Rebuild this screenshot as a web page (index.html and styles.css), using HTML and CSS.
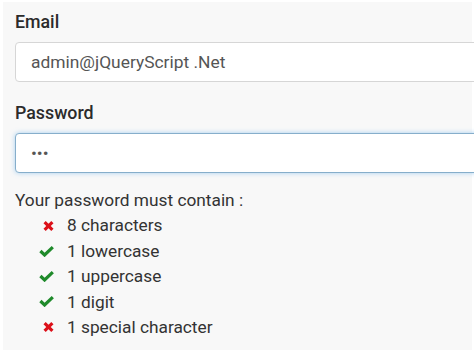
FILE: index.html
```html
<!DOCTYPE html>
<html lang="en">
<head>
    <meta charset="UTF-8">
    <meta name="viewport" content="width=device-width, initial-scale=1.0">
    <title>Password Requirements</title>
    <link rel="stylesheet" href="styles.css">
</head>
<body>
    <div class="panel">
        <form class="form" action="#" method="post">
            <div class="form-group">
                <label class="form-label" for="email">Email</label>
                <input class="form-control" type="text" id="email" name="email" value="admin@jQueryScript .Net" readonly>
            </div>

            <div class="form-group">
                <label class="form-label" for="password">Password</label>
                <input class="form-control is-focused" type="password" id="password" name="password" value="abc" readonly>
            </div>

            <div class="rules">
                <p class="rules-title">Your password must contain :</p>
                <ul class="rules-list">
                    <li class="rule">
                        <span class="rule-icon">
                            <svg class="icon-cross" width="11" height="10" viewBox="0 0 11 10"><path d="M1.6 1.2 L9.4 8.8 M9.4 1.2 L1.6 8.8"/></svg>
                        </span>
                        <span class="rule-text">8 characters</span>
                    </li>
                    <li class="rule">
                        <span class="rule-icon">
                            <svg class="icon-check" width="15" height="11" viewBox="0 0 15 11"><path d="M1.4 5 L5.6 9 L13.8 1.2"/></svg>
                        </span>
                        <span class="rule-text">1 lowercase</span>
                    </li>
                    <li class="rule">
                        <span class="rule-icon">
                            <svg class="icon-check" width="15" height="11" viewBox="0 0 15 11"><path d="M1.4 5 L5.6 9 L13.8 1.2"/></svg>
                        </span>
                        <span class="rule-text">1 uppercase</span>
                    </li>
                    <li class="rule">
                        <span class="rule-icon">
                            <svg class="icon-check" width="15" height="11" viewBox="0 0 15 11"><path d="M1.4 5 L5.6 9 L13.8 1.2"/></svg>
                        </span>
                        <span class="rule-text">1 digit</span>
                    </li>
                    <li class="rule">
                        <span class="rule-icon">
                            <svg class="icon-cross" width="11" height="10" viewBox="0 0 11 10"><path d="M1.6 1.2 L9.4 8.8 M9.4 1.2 L1.6 8.8"/></svg>
                        </span>
                        <span class="rule-text">1 special character</span>
                    </li>
                </ul>
            </div>
        </form>
    </div>
</body>
</html>
```

FILE: styles.css
```css
* {
    margin: 0;
    padding: 0;
    box-sizing: border-box;
}

html, body {
    height: 100%;
}

body {
    background-color: #fff;
    font-family: Roboto, "Liberation Sans", sans-serif;
    color: #333;
    overflow: hidden;
}

.panel {
    margin: 2px 2px 3px 3px;
    height: calc(100% - 5px);
    background-color: #f8f8f8;
    padding: 8px 0 0 12px;
}

/* Campos do formulário */
.form-group {
    margin-bottom: 19px;
}

.form-label {
    display: block;
    font-size: 17.8px;
    line-height: 24px;
    font-weight: 500;
    color: #2b2b2b;
    margin-bottom: 8px;
}

.form-control {
    display: block;
    width: 480px;
    height: 40px;
    padding: 0 15px;
    font-family: Roboto, "Liberation Sans", sans-serif;
    font-size: 17.4px;
    color: #555;
    background-color: #fff;
    border: 1px solid #d6d6d6;
    border-radius: 4px;
    outline: none;
}

.form-control.is-focused {
    border-color: #86aecb;
    box-shadow: 0 0 5px rgba(102, 175, 233, 0.55);
}

/* Regras da senha */
.rules {
    margin-top: -4px;
    font-size: 17.3px;
    line-height: 25.4px;
    color: #333;
}

.rules-list {
    list-style: none;
    padding-left: 24px;
}

.rule {
    display: flex;
    align-items: center;
}

.rule-icon {
    width: 15px;
    height: 25.4px;
    display: flex;
    align-items: center;
    justify-content: center;
    margin-right: 13px;
    padding-bottom: 1px;
}

.rule-icon svg {
    display: block;
    fill: none;
}

.icon-cross {
    margin-left: 4px;
    stroke: #dc1019;
    stroke-width: 3.2;
}

.icon-check {
    stroke: #1f8a2b;
    stroke-width: 3.2;
}
```
